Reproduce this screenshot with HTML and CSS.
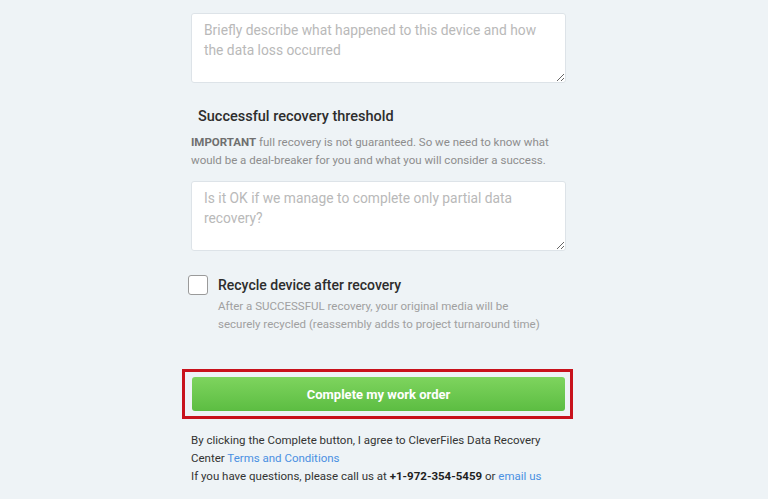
FILE: index.html
```html
<!DOCTYPE html>
<html lang="en">
<head>
  <meta charset="UTF-8">
  <meta name="viewport" content="width=device-width, initial-scale=1.0">
  <title>Work order</title>
  <link rel="stylesheet" href="styles.css">
</head>
<body>
  <div class="order-form">
    <textarea class="field" placeholder="Briefly describe what happened to this device and how the data loss occurred"></textarea>

    <h4 class="section-title">Successful recovery threshold</h4>
    <p class="hint"><b>IMPORTANT</b> full recovery is not guaranteed. So we need to know what would be a deal-breaker for you and what you will consider a success.</p>
    <textarea class="field" placeholder="Is it OK if we manage to complete only partial data recovery?"></textarea>

    <label class="recycle">
      <span class="box"></span>
      <span class="recycle-text">
        <span class="recycle-title">Recycle device after recovery</span>
        <span class="recycle-note">After a SUCCESSFUL recovery, your original media will be securely recycled (reassembly adds to project turnaround time)</span>
      </span>
    </label>

    <div class="highlight">
      <button class="submit-button">Complete my work order</button>
    </div>

    <p class="terms">By clicking the Complete button, I agree to CleverFiles Data Recovery Center <a href="#">Terms and Conditions</a><br>
    If you have questions, please call us at <b>+1-972-354-5459</b> or <a href="#">email us</a></p>
  </div>
</body>
</html>
```

FILE: styles.css
```css
/* Estilos generales */
body {
  margin: 0;
  background-color: #eef3f6;
  font-family: Roboto, "Liberation Sans", sans-serif;
  color: #333333;
}

.order-form {
  width: 375px;
  margin: 0 0 0 191px;
  padding-top: 13px;
}

/* Campos de texto */
.field {
  display: block;
  width: 100%;
  height: 70px;
  box-sizing: border-box;
  padding: 6px 12px 8px;
  border: 1px solid #dde3e8;
  border-radius: 3px;
  background-color: #ffffff;
  font-family: inherit;
  font-size: 13.8px;
  line-height: 20px;
  color: #333333;
  resize: vertical;
}

.field::placeholder {
  color: #b9b9b9;
}

.section-title {
  margin: 24px 0 0 7px;
  font-size: 14.5px;
  font-weight: 500;
  line-height: 20px;
  color: #2d2d2d;
}

.hint {
  margin: 6px 0 12px;
  font-size: 11.5px;
  line-height: 18px;
  color: #8d8d8d;
}

.hint b {
  color: #6f6f6f;
}

/* Casilla de reciclaje */
.recycle {
  display: flex;
  gap: 10px;
  margin: 24px 0 0 -3px;
  cursor: pointer;
}

.box {
  flex: none;
  width: 18px;
  height: 18px;
  border: 1px solid #9a9a9a;
  border-radius: 3px;
  background-color: #ffffff;
}

.recycle-text {
  display: flex;
  flex-direction: column;
}

.recycle-title {
  font-size: 14px;
  font-weight: 500;
  line-height: 20px;
  color: #2d2d2d;
}

.recycle-note {
  max-width: 325px;
  margin-top: 2px;
  font-size: 11.5px;
  line-height: 18px;
  color: #a0a0a0;
}

/* Botón */
.highlight {
  margin: 36px -7px 0 -9px;
  padding: 5px 5px 5px 7px;
  border: 3px solid #c8121c;
}

.submit-button {
  display: block;
  width: 100%;
  height: 34px;
  border: none;
  border-radius: 3px;
  background: linear-gradient(#7ed45e, #5cbd42);
  color: #ffffff;
  font-family: inherit;
  font-size: 13px;
  font-weight: 700;
  cursor: pointer;
}

.terms {
  margin: 12px 0 0;
  font-size: 11.5px;
  line-height: 18px;
  color: #333333;
}

.terms a {
  color: #4a90e2;
  text-decoration: none;
}

.terms b {
  color: #1f1f1f;
}
```
